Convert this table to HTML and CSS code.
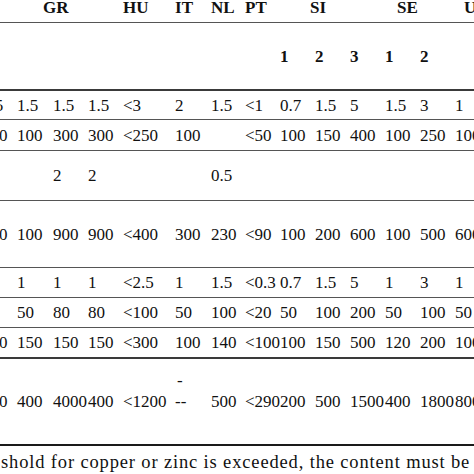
FILE: index.html
```html
<!DOCTYPE html>
<html lang="en">
<head>
<meta charset="utf-8">
<title>Table</title>
<link rel="stylesheet" href="styles.css">
</head>
<body>
<div class="frame">
  <table class="data">
    <colgroup>
      <col class="w35"><col class="w36"><col class="w35"><col class="w35"><col class="w52"><col class="w36"><col class="w34">
      <col class="w35"><col class="w35"><col class="w35"><col class="w35"><col class="w35"><col class="w35"><col class="w40">
    </colgroup>
    <thead>
      <tr class="row-head">
        <th></th><th colspan="3" class="gr">GR</th><th>HU</th><th>IT</th><th>NL</th><th>PT</th>
        <th colspan="3" class="si">SI</th><th colspan="2" class="se">SE</th><th class="uk">UK</th>
      </tr>
      <tr class="row-sub">
        <th></th><th></th><th></th><th></th><th></th><th></th><th></th><th></th>
        <th>1</th><th>2</th><th>3</th><th>1</th><th>2</th><th></th>
      </tr>
    </thead>
    <tbody>
      <tr class="row-a">
        <td>1.5</td><td>1.5</td><td>1.5</td><td>1.5</td><td>&lt;3</td><td>2</td><td>1.5</td>
        <td>&lt;1</td><td>0.7</td><td>1.5</td><td>5</td><td>1.5</td><td>3</td><td>1</td>
      </tr>
      <tr class="row-b">
        <td>100</td><td>100</td><td>300</td><td>300</td><td>&lt;250</td><td>100</td><td></td>
        <td>&lt;50</td><td>100</td><td>150</td><td>400</td><td>100</td><td>250</td><td>100</td>
      </tr>
      <tr class="row-c">
        <td></td><td></td><td>2</td><td>2</td><td></td><td></td><td>0.5</td>
        <td></td><td></td><td></td><td></td><td></td><td></td><td></td>
      </tr>
      <tr class="row-d">
        <td>100</td><td>100</td><td>900</td><td>900</td><td>&lt;400</td><td>300</td><td>230</td>
        <td>&lt;90</td><td>100</td><td>200</td><td>600</td><td>100</td><td>500</td><td>600</td>
      </tr>
      <tr class="row-e">
        <td></td><td>1</td><td>1</td><td>1</td><td>&lt;2.5</td><td>1</td><td>1.5</td>
        <td>&lt;0.3</td><td>0.7</td><td>1.5</td><td>5</td><td>1</td><td>3</td><td>1</td>
      </tr>
      <tr class="row-f">
        <td></td><td>50</td><td>80</td><td>80</td><td>&lt;100</td><td>50</td><td>100</td>
        <td>&lt;20</td><td>50</td><td>100</td><td>200</td><td>50</td><td>100</td><td>50</td>
      </tr>
      <tr class="row-g">
        <td>150</td><td>150</td><td>150</td><td>150</td><td>&lt;300</td><td>100</td><td>140</td>
        <td>&lt;100</td><td>100</td><td>150</td><td>500</td><td>120</td><td>200</td><td>100</td>
      </tr>
      <tr class="row-h">
        <td>400</td><td>400</td><td>4000</td><td>400</td><td>&lt;1200</td>
        <td><div class="split"><span class="split-top">-</span><br>--</div></td><td>500</td>
        <td>&lt;290</td><td>200</td><td>500</td><td>1500</td><td>400</td><td>1800</td><td>800</td>
      </tr>
    </tbody>
  </table>
  <p class="caption">shold for copper or zinc is exceeded, the content must be</p>
</div>
</body>
</html>
```

FILE: styles.css
```css
html, body {
  margin: 0;
  padding: 0;
  background: #ffffff;
}

.frame {
  width: 474px;
  height: 474px;
  overflow: hidden;
  font-family: "Liberation Serif", "Times New Roman", serif;
  color: #111111;
}

.data {
  table-layout: fixed;
  width: 513px;
  border-collapse: separate;
  border-spacing: 0;
  margin: 0 0 0 -18px;
  font-size: 17px;
  line-height: 21px;
}

.w34 { width: 34px; }
.w35 { width: 35px; }
.w36 { width: 36px; }
.w40 { width: 40px; }
.w52 { width: 52px; }

.data th,
.data td {
  padding: 0;
  text-align: left;
  white-space: nowrap;
  vertical-align: middle;
  overflow: visible;
}

.data th {
  font-weight: bold;
}

.row-head th {
  height: 22px;
  line-height: 16px;
  vertical-align: top;
  border-bottom: 1px solid #555555;
}

.row-head .gr { padding-left: 26px; }
.row-head .si { padding-left: 30px; }
.row-head .se { padding-left: 12px; }
.row-head .uk { padding-left: 9px; }

.row-sub th {
  height: 66px;
  border-bottom: 2px solid #3a3a3a;
}

.row-a td { height: 28px; border-bottom: 1px solid #555555; }
.row-b td { height: 30px; border-bottom: 1px solid #555555; }
.row-c td { height: 49px; border-bottom: 1px solid #555555; }
.row-d td { height: 66px; border-bottom: 1px solid #555555; }
.row-e td { height: 29px; border-bottom: 1px solid #555555; }
.row-f td { height: 29px; border-bottom: 1px solid #555555; }
.row-g td { height: 29px; border-bottom: 2px solid #3a3a3a; }
.row-h td { height: 85px; border-bottom: 2px solid #1a1a1a; }

.split {
  padding-bottom: 21px;
}

.split-top {
  margin-left: 2px;
}

.caption {
  margin: 5px 0 0 1px;
  font-size: 18.5px;
  line-height: 22px;
  letter-spacing: 0.85px;
  white-space: nowrap;
}
```
